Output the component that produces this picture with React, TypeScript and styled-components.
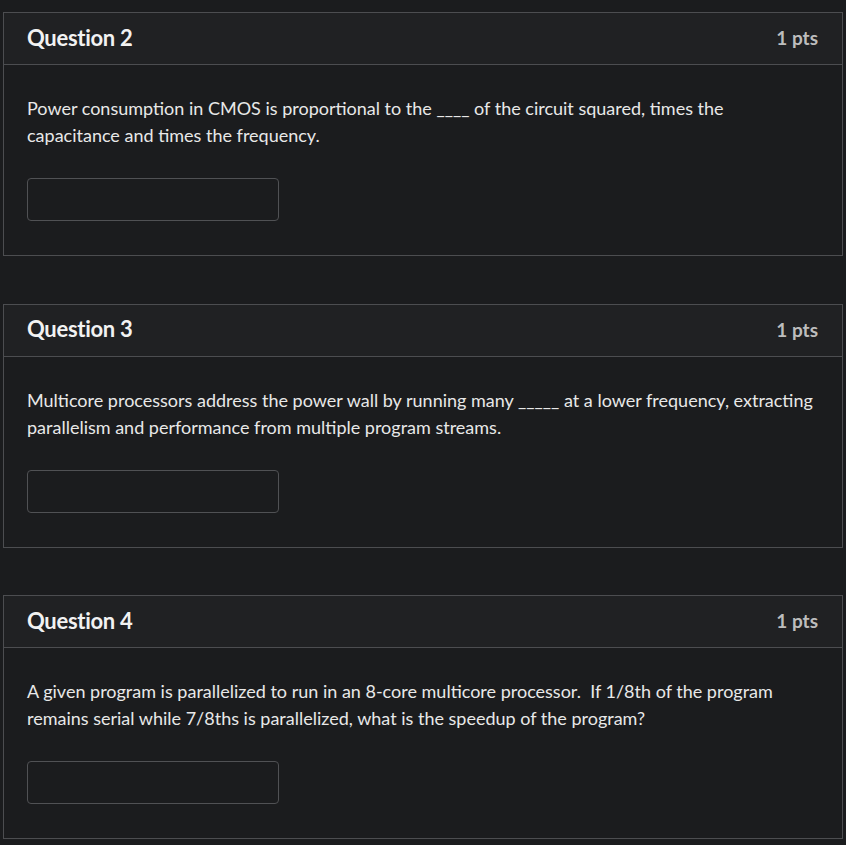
import React from "react";
import styled, { createGlobalStyle } from "styled-components";

const Global = createGlobalStyle`
  html, body { margin: 0; padding: 0; background: #1b1c1e; }
  body { font-family: Lato, "Noto Sans", sans-serif; color: #e6e6e6; }
`;

const Page = styled.div`
  display: flex;
  flex-direction: column;
  gap: 47.5px;
  padding: 12px 3px 0 3px;
  min-height: 845px;
  box-sizing: border-box;
  background: #1b1c1e;
`;

const Card = styled.section`
  border: 1px solid #4c4d50;
  background: #1b1c1e;
`;

const Header = styled.header`
  height: 51px;
  display: flex;
  align-items: center;
  justify-content: space-between;
  padding: 0 24px 0 23px;
  background: #202123;
  border-bottom: 1px solid #4c4d50;
`;

const Title = styled.h2`
  margin: 0 0 3px 0;
  font-size: 22px;
  font-weight: 700;
  color: #f2f2f2;
  letter-spacing: -0.3px;
`;

const Points = styled.span`
  margin-bottom: 2px;
  font-size: 19px;
  font-weight: 700;
  color: #bdbdbd;
`;

const Body = styled.div`
  padding: 30px 24px 34px 23px;
  display: flex;
  flex-direction: column;
  gap: 29px;
`;

const Text = styled.p`
  margin: 0;
  font-size: 18px;
  line-height: 27px;
  color: #e8e8e8;
`;

const Answer = styled.input`
  width: 252px;
  height: 43px;
  box-sizing: border-box;
  border: 1px solid #505154;
  border-radius: 4px;
  background: #1b1c1e;
  color: #e8e8e8;
  font-family: inherit;
  font-size: 18px;
  padding: 0 10px;
  outline: none;
`;

const questions = [
  {
    title: "Question 2",
    text: "Power consumption in CMOS is proportional to the ____ of the circuit squared, times the capacitance and times the frequency.",
  },
  {
    title: "Question 3",
    text: "Multicore processors address the power wall by running many _____ at a lower frequency, extracting parallelism and performance from multiple program streams.",
  },
  {
    title: "Question 4",
    text: "A given program is parallelized to run in an 8-core multicore processor.\u00a0 If 1/8th of the program remains serial while 7/8ths is parallelized, what is the speedup of the program?",
  },
];

export default function App() {
  return (
    <>
      <Global />
      <Page>
        {questions.map((q) => (
          <Card key={q.title}>
            <Header>
              <Title>{q.title}</Title>
              <Points>1 pts</Points>
            </Header>
            <Body>
              <Text>{q.text}</Text>
              <Answer type="text" aria-label={q.title} />
            </Body>
          </Card>
        ))}
      </Page>
    </>
  );
}
